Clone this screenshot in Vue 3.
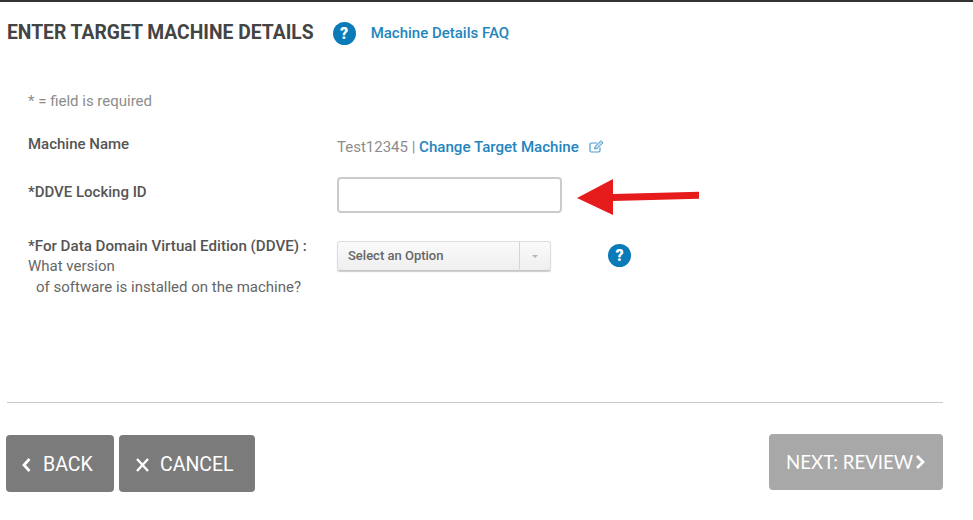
<script setup>
const helpIcon = '?'
</script>

<template>
  <div class="page">
    <header class="head">
      <h1 class="title">ENTER TARGET MACHINE DETAILS</h1>
      <span class="help">{{ helpIcon }}</span>
      <a class="faq">Machine Details FAQ</a>
    </header>

    <p class="req">* = field is required</p>

    <section class="form">
      <div class="row row-name">
        <div class="label"><b>Machine Name</b></div>
        <div class="value name-value">
          <span class="muted">Test12345 | </span><a class="link">Change Target Machine</a>
          <svg class="edit" width="15" height="13" viewBox="0 0 15 13" fill="none">
            <path d="M11 7.500V10.500a1.500 1.500 0 0 1-1.500 1.500H2.500A1.500 1.500 0 0 1 1 10.500V4.500A1.500 1.500 0 0 1 2.500 3H8" stroke="#4a9ccb" stroke-width="1.200"/>
            <path d="M5.500 9l.6-2.600L11.800.8l2.200 2-5.800 5.600z" stroke="#4a9ccb" stroke-width="1" fill="#bcdcee"/>
          </svg>
        </div>
      </div>

      <div class="row row-id">
        <div class="label"><b>*DDVE Locking ID</b></div>
        <div class="value field-wrap">
          <input class="input" type="text" />
          <svg class="arrow" width="124" height="38" viewBox="0 0 124 38">
            <path d="M0 19L36 0V15L122 12.7V19.7L36 22V36z" fill="#e61c1c"/>
          </svg>
        </div>
      </div>

      <div class="row row-version">
        <div class="label">
          <b class="long">*For Data Domain Virtual Edition (DDVE) :</b>
          <div>What version</div>
          <div class="indent">of software is installed on the machine?</div>
        </div>
        <div class="value select-line">
          <div class="select">
            <span class="select-text">Select an Option</span>
            <span class="select-caret"><i></i></span>
          </div>
          <span class="help help-sm">{{ helpIcon }}</span>
        </div>
      </div>
    </section>

    <hr class="rule" />

    <footer class="actions">
      <div class="left">
        <button class="btn back">
          <svg width="11" height="14" viewBox="0 0 11 14" fill="none"><path d="M8.500 1L3 7l5.500 6" stroke="#fff" stroke-width="2.800"/></svg>
          BACK
        </button>
        <button class="btn cancel">
          <svg width="15" height="14" viewBox="0 0 15 14" fill="none"><path d="M2 1l11 12M13 1L2 13" stroke="#fff" stroke-width="2.400"/></svg>
          CANCEL
        </button>
      </div>
      <button class="btn next">
        NEXT: REVIEW
        <svg width="11" height="16" viewBox="0 0 11 16" fill="none"><path d="M2 2l6 6-6 6" stroke="#fff" stroke-width="2.800"/></svg>
      </button>
    </footer>
  </div>
</template>

<style scoped>
.page {
  width: 973px;
  height: 520px;
  box-sizing: border-box;
  border-top: 2px solid #333;
  background: #fff;
  font-family: Roboto, "Liberation Sans", sans-serif;
  font-size: 15px;
  color: #666;
  overflow: hidden;
}
.head {
  display: flex;
  align-items: center;
  height: 24px;
  margin-top: 18px;
  padding-left: 7px;
}
.title {
  margin: 0;
  font-size: 19.300px;
  font-weight: 700;
  color: #444;
  white-space: nowrap;
}
.help {
  display: inline-flex;
  align-items: center;
  justify-content: center;
  width: 23px;
  height: 23px;
  border-radius: 50%;
  background: #0a7ab8;
  color: #fff;
  font-weight: 900;
  font-size: 16px;
  margin-left: 19px;
  margin-top: 2px;
  flex: none;
}
.faq {
  margin-left: 15px;
  margin-top: 2px;
  color: #2385bd;
  font-weight: 500;
  font-size: 15px;
}
.req {
  margin: 47px 0 0 28px;
  color: #8c8c8c;
  line-height: 20px;
}
.form {
  margin-top: 23px;
  padding-left: 28px;
}
.row {
  display: grid;
  grid-template-columns: 309px 1fr;
}
.label {
  line-height: 21px;
  color: #666;
}
.label b {
  font-weight: 500;
  color: #555;
}
.label .long {
  display: block;
  height: 20px;
  font-size: 15.150px;
  white-space: nowrap;
}
.indent {
  padding-left: 8px;
}
.row-name {
  height: 48px;
}
.value {
  line-height: 21px;
}
.name-value {
  padding-top: 3px;
}
.muted {
  color: #8c8c8c;
}
.link {
  color: #2385bd;
  font-weight: 500;
  font-size: 15.100px;
}
.edit {
  margin-left: 10px;
  vertical-align: -1px;
}
.row-id {
  height: 54px;
}
.field-wrap {
  position: relative;
  margin-top: -5px;
}
.input {
  display: block;
  width: 225px;
  height: 36px;
  box-sizing: border-box;
  border: 2px solid #cbcbcb;
  border-radius: 4px;
  background: #fff;
  padding: 0;
}
.arrow {
  position: absolute;
  left: 240px;
  top: 2px;
}
.row-version {
  height: 90px;
}
.select-line {
  display: flex;
  align-items: flex-start;
  margin-top: 5px;
}
.select {
  display: flex;
  width: 214px;
  height: 30px;
  box-sizing: border-box;
  border: 1px solid #ddd;
  border-bottom-color: #c6c6c6;
  border-radius: 3px;
  background: linear-gradient(#fafafa, #efefef);
  box-shadow: 0 1px 1px #ccc;
}
.select-text {
  flex: 1;
  padding-left: 10px;
  font-size: 13px;
  font-weight: 500;
  line-height: 28px;
  color: #666;
}
.select-caret {
  position: relative;
  width: 30px;
  border-left: 1px solid #d4d4d4;
  margin-bottom: -2px;
}
.select-caret i {
  position: absolute;
  left: 12px;
  top: 13px;
  border: 3px solid transparent;
  border-top: 3px solid #b5b5b5;
  border-bottom: 0;
}
.help-sm {
  margin-left: 57px;
  margin-top: 3px;
}
.rule {
  width: 936px;
  margin: 76px 0 0 7px;
  border: 0;
  border-top: 1px solid #c9c9c9;
}
.actions {
  display: flex;
  justify-content: space-between;
  align-items: flex-start;
  width: 937px;
  margin: 31px 0 0 6px;
}
.left {
  display: flex;
  gap: 5px;
  padding-top: 1px;
}
.btn {
  display: flex;
  align-items: center;
  height: 57px;
  padding: 0;
  border: 0;
  border-radius: 4px;
  background: #7b7b7b;
  color: #fff;
  font-family: Roboto, "Liberation Sans", sans-serif;
  font-size: 19.500px;
  font-weight: 400;
}
.back {
  width: 108px;
  padding: 2px 0 0 15px;
  gap: 11px;
}
.cancel {
  width: 136px;
  padding: 2px 0 0 16px;
  gap: 10px;
}
.next {
  width: 174px;
  height: 56px;
  padding-left: 17px;
  gap: 2px;
  background: #a8a8a8;
  font-family: Lato, Roboto, sans-serif;
  font-size: 18.700px;
}
</style>
